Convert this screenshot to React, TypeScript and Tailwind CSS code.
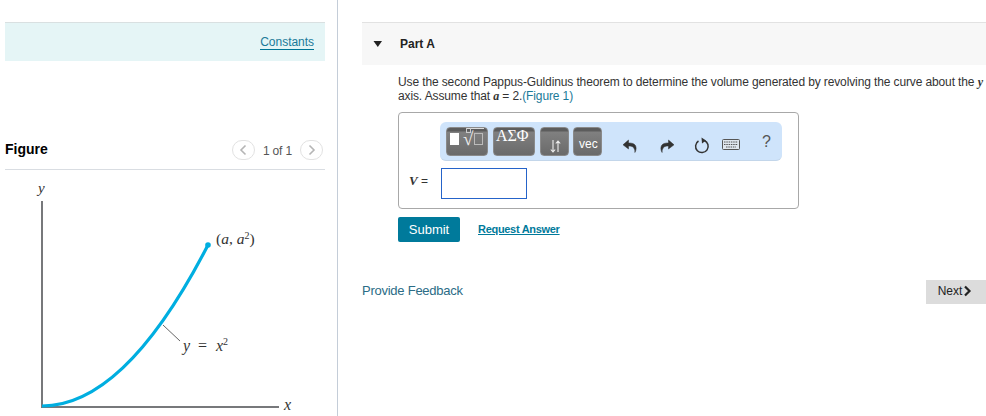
import React from "react";

const btn =
  "relative h-[29px] rounded-[4px] border border-[#8a8a8a] bg-[linear-gradient(#5c5c5c_0,#5c5c5c_3px,#808080_4px,#6a6a6a_100%)] text-white overflow-hidden shrink-0";

function Figure() {
  return (
    <svg width="320" height="246" viewBox="0 170 320 246" className="block" style={{ fontFamily: '"Liberation Serif", serif' }}>
      <rect x="41" y="201" width="2" height="207" fill="#77787b" />
      <rect x="41" y="406" width="238" height="2" fill="#77787b" />
      <path d="M42 406 Q125 406 208 245" fill="none" stroke="#00aee0" strokeWidth="3.2" />
      <circle cx="208" cy="245" r="2.8" fill="#00aee0" />
      <line x1="163" y1="325" x2="180" y2="341" stroke="#666" strokeWidth="1" />
      <text x="38" y="193" fontSize="15" fontStyle="italic" fill="#333">y</text>
      <text x="284" y="410" fontSize="16" fontStyle="italic" fill="#333">x</text>
      <text x="216" y="244" fontSize="15.5" fill="#333">(<tspan fontStyle="italic">a</tspan>, <tspan fontStyle="italic">a</tspan><tspan fontSize="10" dy="-5">2</tspan><tspan dy="5">)</tspan></text>
      <text x="183" y="351" fontSize="16" fill="#333"><tspan fontStyle="italic">y</tspan><tspan x="198">=</tspan><tspan x="216" fontStyle="italic">x</tspan><tspan fontSize="10" dy="-6">2</tspan></text>
    </svg>
  );
}

function Left() {
  return (
    <div className="w-[338px] shrink-0 border-r border-[#c4cdd8] h-[416px] overflow-hidden pt-[22px] pl-[5px] pr-[12px]">
      <div className="h-[39px] bg-[#e5f5f6] border-t border-[#d9e0e1] flex justify-end pr-[11px] pt-[12px]">
        <a className="text-[12px] leading-[14px] h-[15px] text-[#1b7a99] border-b border-[#007595] tracking-[-0.03px]">Constants</a>
      </div>
      <div className="h-[109px] border-b border-[#d9dde2] flex items-end justify-between pb-[8px]">
        <span className="text-[14px] leading-[16px] font-bold text-black mb-[4px]">Figure</span>
        <div className="flex items-center gap-[8px] text-[12px] text-[#555] mr-[2px]">
          <span className="w-[23px] h-[20px] rounded-full border border-[#e2e2e2] flex items-center justify-center">
            <svg width="8" height="12" viewBox="0 0 8 12"><path d="M6.5 1.5 2 6l4.5 4.500" fill="none" stroke="#b5b5b5" strokeWidth="1.6" /></svg>
          </span>
          <span className="leading-[20px] mt-[2px] tracking-[-0.15px]">1 of 1</span>
          <span className="w-[23px] h-[20px] rounded-full border border-[#e2e2e2] flex items-center justify-center">
            <svg width="8" height="12" viewBox="0 0 8 12"><path d="M1.5 1.5 6 6l-4.500 4.500" fill="none" stroke="#b5b5b5" strokeWidth="1.6" /></svg>
          </span>
        </div>
      </div>
      <div className="-ml-[5px]">
        <Figure />
      </div>
    </div>
  );
}

function Toolbar() {
  return (
    <div className="h-[39px] w-[342px] ml-[41px] rounded-[6px] bg-[#cfe4fb] border-b border-[#c3d6ea] flex items-center pl-[6px]">
      <div className={`${btn} w-[42px]`}>
        <span className="absolute left-[3px] top-[5px] w-[9px] h-[12px] bg-white" />
        <span className="absolute left-[16px] top-[1px] text-[19px] leading-[20px] text-[#eee] [font-family:'Liberation_Serif',serif]">√</span>
        <span className="absolute left-[19px] top-0 w-[18px] h-px bg-[#ddd]" />
        <span className="absolute left-[19px] top-[-1px] w-[5px] h-[6px] border border-[#ccc]" />
        <span className="absolute left-[27px] top-[5px] w-[9px] h-[12px] border border-[#bbb]" />
      </div>
      <div className={`${btn} w-[42px] ml-[5px]`}>
        <span className="absolute left-[2px] top-[-1px] text-[16px] leading-[18px] text-white whitespace-nowrap [font-family:'Liberation_Serif',serif]">ΑΣΦ</span>
      </div>
      <div className={`${btn} w-[29px] ml-[5px]`}>
        <svg className="absolute left-[9px] top-[12px]" width="11" height="13" viewBox="0 0 11 13" fill="none" stroke="#eee" strokeWidth="1.1">
          <path d="M3 0v12M.8 9.500 3 12l2.200-2.500M8 12V1M5.800 3.500 8 1l2.200 2.500" />
        </svg>
      </div>
      <div className={`${btn} w-[29px] ml-[4px]`}>
        <span className="absolute left-[5px] top-[8px] text-[12px] leading-[16px] text-white">vec</span>
      </div>
      <svg className="ml-[20px] mt-[11px]" width="15" height="15" viewBox="0 0 14 15">
        <path d="M6 1 .5 5.800 6 10V7c3-.3 5 .8 6 3.200.4 1 .5 2.200.4 3.300 1.400-2.500 1.700-5.100.4-7.200C11.600 4.600 9 3.800 6 4z" fill="#333" stroke="#333" strokeWidth=".5" />
      </svg>
      <svg className="ml-[23px] mt-[11px]" width="15" height="15" viewBox="0 0 14 15">
        <path d="M8 1l5.500 4.800L8 10V7c-3-.3-5 .8-6 3.200-.4 1-.5 2.200-.4 3.300C.2 11 -.1 8.400 1.200 6.300 2.400 4.600 5 3.800 8 4z" fill="#333" stroke="#333" strokeWidth=".5" />
      </svg>
      <svg className="ml-[19px] mt-[9px]" width="16" height="17" viewBox="0 0 16 17">
        <path d="M10.300 3.500A6.300 6.300 0 1 1 4.500 4" fill="none" stroke="#333" strokeWidth="1.500" />
        <path d="M7.500 .5 12 3.500 8 6.500z" fill="#333" />
      </svg>
      <svg className="ml-[12px] mt-[7px]" width="18" height="11" viewBox="0 0 18 11">
        <rect x=".5" y=".5" width="17" height="10" rx="1" fill="#dfe6ee" stroke="#555" />
        <path d="M2 3h14M2 5.500h14M4 8h10" stroke="#555" strokeWidth="1.200" strokeDasharray="1.500 .8" />
      </svg>
      <span className="ml-[22px] text-[16px] leading-[18px] text-[#555] mt-[1px]">?</span>
    </div>
  );
}

function Right() {
  return (
    <div className="flex-1 min-w-0 pt-[22px] pl-[24px] overflow-hidden">
      <div className="h-[43px] bg-[#f7f7f7] border-t border-[#e2e2e2] flex items-center pl-[11px]">
        <svg width="10" height="6" viewBox="0 0 10 6"><path d="M.5 0h8.500L4.800 6z" fill="#222" /></svg>
        <span className="ml-[17px] text-[12px] font-bold text-[#222]">Part A</span>
      </div>
      <div className="pl-[36px]">
        <p className="mt-[10px] text-[12px] leading-[14px] text-[#333] whitespace-nowrap tracking-[-0.12px]">
          Use the second Pappus-Guldinus theorem to determine the volume generated by revolving the curve about the{" "}
          <b className="italic [font-family:'Liberation_Serif',serif]">y</b>
          <br />
          axis. Assume that <b className="italic [font-family:'Liberation_Serif',serif]">a</b> = 2.<span className="text-[#1b7a99]">(Figure 1)</span>
        </p>
        <div className="mt-[9px] w-[401px] h-[97px] rounded-[4px] border border-[#a8a8a8] pt-[9px]">
          <Toolbar />
          <div className="mt-[7px] flex items-center pl-[10px]">
            <span className="w-[32px] text-[12px] text-[#333] mb-[6px]"><i className="font-bold text-[13px] text-[#333] [font-family:'Liberation_Serif',serif]">V</i> =</span>
            <div className="w-[86px] h-[31px] border border-[#2563c9] bg-white" />
          </div>
        </div>
        <div className="mt-[8px] flex items-center">
          <button className="w-[62px] h-[25px] rounded-[2px] bg-[#007a9b] text-white text-[13px] leading-[22px] text-center">Submit</button>
          <a className="ml-[18px] text-[11px] font-bold text-[#007a9b] underline tracking-[-0.3px]">Request Answer</a>
        </div>
      </div>
      <div className="mt-[38px] flex items-start justify-between">
        <a className="mt-[1px] text-[13px] text-[#2b6c86] tracking-[-0.25px]">Provide Feedback</a>
        <div className="w-[60px] h-[24px] bg-[#dcdcdc] flex items-center justify-center gap-[1px] pb-[2px] pr-[2px] text-[12px] text-[#222]">
          Next
          <svg width="9" height="12" viewBox="0 0 8 12"><path d="M1.500 1.500 6 6l-4.500 4.500" fill="none" stroke="#222" strokeWidth="2.200" /></svg>
        </div>
      </div>
    </div>
  );
}

export default function App() {
  return (
    <div className="flex w-[986px] h-[416px] overflow-hidden bg-white [font-family:'Liberation_Sans',Arial,sans-serif]">
      <Left />
      <Right />
    </div>
  );
}
